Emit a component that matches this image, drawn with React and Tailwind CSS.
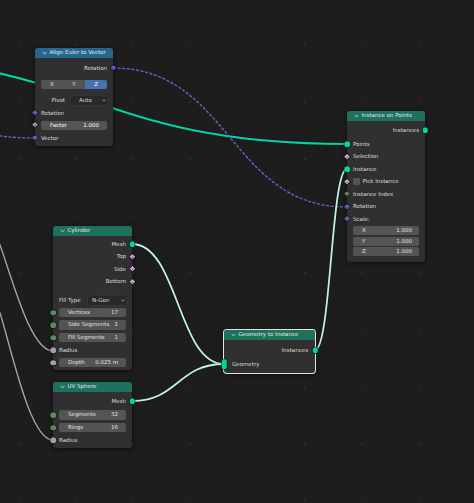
import React from "react";

function Chevron() {
  return (
    <svg width="5" height="4" viewBox="0 0 5 4" className="shrink-0">
      <polyline points="0.7,1 2.5,2.8 4.3,1" fill="none" stroke="#e8e8e8" strokeWidth="0.8" />
    </svg>
  );
}

function MenuChevron() {
  return (
    <svg width="4" height="3" viewBox="0 0 4 3" className="shrink-0">
      <polyline points="0.5,0.8 2,2.2 3.5,0.8" fill="none" stroke="#d0d0d0" strokeWidth="0.7" />
    </svg>
  );
}

function Sock({ side, kind, color }) {
  const pos = side === "left" ? "left-0 -translate-x-1/2" : "right-0 translate-x-1/2";
  if (kind === "circle") {
    return (
      <span
        className={`absolute top-1/2 -translate-y-1/2 ${pos} w-[5.5px] h-[5.5px] rounded-full ${color} shadow-[0_0_0_0.6px_rgba(0,0,0,0.7)]`}
      />
    );
  }
  if (kind === "multi") {
    return (
      <span
        className={`absolute top-1/2 -translate-y-1/2 ${pos} w-[4.5px] h-[9.5px] rounded-[2px] ${color} shadow-[0_0_0_0.6px_rgba(0,0,0,0.7)]`}
      />
    );
  }
  return (
    <span
      className={`absolute top-1/2 -translate-y-1/2 ${pos} w-[4.4px] h-[4.4px] rotate-45 ${color} flex items-center justify-center shadow-[0_0_0_0.6px_rgba(0,0,0,0.7)]`}
    >
      <span className="w-[1.4px] h-[1.4px] bg-[#303030]" />
    </span>
  );
}

function Node({ pos, color, title, selected, body, children }) {
  return (
    <div
      className={`absolute rounded-[3px] bg-[#303030] shadow-[0_1px_5px_rgba(0,0,0,0.6)] ${
        selected ? "ring-1 ring-[#e4e4e4]" : ""
      } ${pos}`}
    >
      <div className={`h-[10px] flex items-center pl-[7px] gap-[2.5px] rounded-t-[3px] ${color} text-[#e8e8e8]`}>
        <Chevron />
        <span className="leading-none">{title}</span>
      </div>
      <div className={`flex flex-col ${body}`}>{children}</div>
    </div>
  );
}

function Row({ className = "", children }) {
  return <div className={`relative h-[12.5px] flex items-center ${className}`}>{children}</div>;
}

function Field({ label, value, className = "" }) {
  return (
    <div
      className={`mx-[6px] flex-1 h-[9.5px] rounded-[2px] bg-[#545454] flex items-center justify-between pl-[9px] pr-[8px] text-[#e2e2e2] leading-none ${className}`}
    >
      <span>{label}</span>
      <span>{value}</span>
    </div>
  );
}

const TEAL = "bg-[#00d6a3]";
const PURPLE = "bg-[#6363c7]";
const PINK = "bg-[#cca6d6]";
const GREEN = "bg-[#598c5c]";
const GREY = "bg-[#a1a1a1]";

function Wire({ d, color, width, outline = true, dash }) {
  return (
    <>
      {outline && <path d={d} fill="none" stroke="#111" strokeWidth={width + 1.3} opacity="0.5" />}
      <path d={d} fill="none" stroke={color} strokeWidth={width} strokeDasharray={dash} />
    </>
  );
}

function Wires() {
  const xs = [19, 76, 133, 190, 248, 305, 362, 419];
  const ys = [45, 102, 159, 216, 273, 330, 387, 444, 501];
  return (
    <svg className="absolute inset-0" width="474" height="503" viewBox="0 0 474 503">
      {ys.map((y) =>
        xs.map((x) => <rect key={`${x}-${y}`} x={x - 0.75} y={y - 0.75} width="1.5" height="1.5" fill="#353535" />)
      )}
      {/* grey float wires */}
      <Wire d="M -6 228 L 0 245 C 14 284, 31 351, 53 351" color="#a6a6a6" width={1.4} />
      <Wire d="M -6 294 L 0 313 C 12 351, 30 440, 53 440" color="#a6a6a6" width={1.4} />
      {/* teal to Points */}
      <Wire d="M -170 56 C 88.5 56, 88.5 144, 347 144" color="#00d6a3" width={2.1} />
      {/* purple dashed */}
      <Wire d="M 113 68 C 230 68, 230 207, 347 207" color="#6a6ad2" width={1.3} outline={false} dash="3 1.6" />
      <Wire d="M -60 130 C -12 130, -12 138, 35 138" color="#6a6ad2" width={1.3} outline={false} dash="3 1.6" />
      {/* highlighted wires */}
      <Wire d="M 132 244 C 178 244, 178 364, 224 364" color="#c4f2e2" width={1.8} />
      <Wire d="M 132 401 C 178 401, 178 364, 224 364" color="#c4f2e2" width={1.8} />
      <Wire d="M 315 350 C 331 350, 331 169, 347 169" color="#c4f2e2" width={1.8} />
    </svg>
  );
}

export default function App() {
  return (
    <div className="relative w-[474px] h-[503px] overflow-hidden bg-[#1d1d1d] font-['DejaVu_Sans',sans-serif] text-[5.5px] text-[#dcdcdc]">
      <Wires />

      {/* Align Euler to Vector */}
      <Node pos="left-[35px] top-[48px] w-[78px]" color="bg-[#28678d]" title="Align Euler to Vector" body="pt-[3.5px] pb-[2px]">
        <Row className="justify-end pr-[6px]">
          <span>Rotation</span>
          <Sock side="right" kind="diamond" color={PURPLE} />
        </Row>
        <Row className="mt-[4px]">
          <div className="mx-[6px] flex-1 h-[9px] flex gap-[0.5px] rounded-[2px] overflow-hidden text-[#e2e2e2]">
            <div className="flex-1 bg-[#545454] flex items-center justify-center">X</div>
            <div className="flex-1 bg-[#545454] flex items-center justify-center">Y</div>
            <div className="flex-1 bg-[#4772b3] flex items-center justify-center text-white">Z</div>
          </div>
        </Row>
        <Row className="mt-[3.5px] justify-end pr-[6px] gap-[6px]">
          <span>Pivot</span>
          <div className="w-[36px] h-[9px] rounded-[2px] bg-[#282828] shadow-[0_0_0_0.5px_#3a3a3a] flex items-center justify-between pl-[8px] pr-[1.5px]">
            <span>Auto</span>
            <MenuChevron />
          </div>
        </Row>
        <Row className="pl-[6px]">
          <Sock side="left" kind="diamond" color={PURPLE} />
          <span>Rotation</span>
        </Row>
        <Row>
          <Sock side="left" kind="diamond" color={GREY} />
          <Field label="Factor" value="1.000" className="bg-[#4772b3] pl-[8px] pr-[7px] text-white" />
        </Row>
        <Row className="pl-[6px]">
          <Sock side="left" kind="diamond" color={PURPLE} />
          <span>Vector</span>
        </Row>
      </Node>

      {/* Instance on Points */}
      <Node pos="left-[347px] top-[111px] w-[78px]" color="bg-[#1d725e]" title="Instance on Points" body="pt-[2.75px] pb-[6px]">
        <Row className="justify-end pr-[6px]">
          <span>Instances</span>
          <Sock side="right" kind="circle" color={TEAL} />
        </Row>
        <Row className="mt-[1.5px] pl-[6px]">
          <Sock side="left" kind="circle" color={TEAL} />
          <span>Points</span>
        </Row>
        <Row className="pl-[6px]">
          <Sock side="left" kind="diamond" color={PINK} />
          <span>Selection</span>
        </Row>
        <Row className="pl-[6px]">
          <Sock side="left" kind="circle" color={TEAL} />
          <span>Instance</span>
        </Row>
        <Row className="pl-[6px] gap-[2.5px]">
          <Sock side="left" kind="diamond" color={PINK} />
          <span className="w-[7px] h-[7px] rounded-[1px] bg-[#545454]" />
          <span>Pick Instance</span>
        </Row>
        <Row className="pl-[6px]">
          <Sock side="left" kind="diamond" color={GREEN} />
          <span>Instance Index</span>
        </Row>
        <Row className="pl-[6px]">
          <Sock side="left" kind="diamond" color={PURPLE} />
          <span>Rotation</span>
        </Row>
        <Row className="pl-[6px]">
          <Sock side="left" kind="diamond" color={PURPLE} />
          <span>Scale:</span>
        </Row>
        <div className="mt-[0.75px] mx-[6px] flex flex-col gap-[1.5px] text-[#e2e2e2]">
          <div className="h-[9px] rounded-[2px] bg-[#545454] flex items-center justify-between pl-[9px] pr-[7px]">
            <span>X</span>
            <span>1.000</span>
          </div>
          <div className="h-[9px] rounded-[2px] bg-[#545454] flex items-center justify-between pl-[9px] pr-[7px]">
            <span>Y</span>
            <span>1.000</span>
          </div>
          <div className="h-[9px] rounded-[2px] bg-[#545454] flex items-center justify-between pl-[9px] pr-[7px]">
            <span>Z</span>
            <span>1.000</span>
          </div>
        </div>
      </Node>

      {/* Cylinder */}
      <Node pos="left-[53px] top-[226px] w-[79px]" color="bg-[#1d725e]" title="Cylinder" body="pt-[1.75px] pb-[1.25px]">
        <Row className="justify-end pr-[6px]">
          <span>Mesh</span>
          <Sock side="right" kind="circle" color={TEAL} />
        </Row>
        <Row className="justify-end pr-[6px]">
          <span>Top</span>
          <Sock side="right" kind="diamond" color={PINK} />
        </Row>
        <Row className="justify-end pr-[6px]">
          <span>Side</span>
          <Sock side="right" kind="diamond" color={PINK} />
        </Row>
        <Row className="justify-end pr-[6px]">
          <span>Bottom</span>
          <Sock side="right" kind="diamond" color={PINK} />
        </Row>
        <Row className="mt-[6px] pl-[6px] pr-[6px] justify-between">
          <span>Fill Type</span>
          <div className="w-[38px] h-[9px] rounded-[2px] bg-[#282828] shadow-[0_0_0_0.5px_#3a3a3a] flex items-center justify-between pl-[4px] pr-[1.5px]">
            <span>N-Gon</span>
            <MenuChevron />
          </div>
        </Row>
        <Row>
          <Sock side="left" kind="circle" color={GREEN} />
          <Field label="Vertices" value="17" />
        </Row>
        <Row>
          <Sock side="left" kind="circle" color={GREEN} />
          <Field label="Side Segments" value="1" />
        </Row>
        <Row>
          <Sock side="left" kind="circle" color={GREEN} />
          <Field label="Fill Segments" value="1" />
        </Row>
        <Row className="pl-[6px]">
          <Sock side="left" kind="circle" color={GREY} />
          <span>Radius</span>
        </Row>
        <Row>
          <Sock side="left" kind="circle" color={GREY} />
          <Field label="Depth" value="0.025 m" />
        </Row>
      </Node>

      {/* UV Sphere */}
      <Node pos="left-[53px] top-[382px] w-[79px]" color="bg-[#1d725e]" title="UV Sphere" body="pt-[2.75px] pb-[1.75px]">
        <Row className="justify-end pr-[6px]">
          <span>Mesh</span>
          <Sock side="right" kind="circle" color={TEAL} />
        </Row>
        <Row className="mt-[1.5px]">
          <Sock side="left" kind="circle" color={GREEN} />
          <Field label="Segments" value="32" />
        </Row>
        <Row>
          <Sock side="left" kind="circle" color={GREEN} />
          <Field label="Rings" value="16" />
        </Row>
        <Row className="pl-[6px]">
          <Sock side="left" kind="circle" color={GREY} />
          <span>Radius</span>
        </Row>
      </Node>

      {/* Geometry to Instance */}
      <Node pos="left-[224px] top-[330px] w-[91px]" color="bg-[#1d725e]" title="Geometry to Instance" selected body="pt-[3.75px] pb-[2.75px]">
        <Row className="justify-end pr-[7px]">
          <span>Instances</span>
          <Sock side="right" kind="circle" color={TEAL} />
        </Row>
        <Row className="mt-[1.5px] pl-[8px]">
          <Sock side="left" kind="multi" color={TEAL} />
          <span>Geometry</span>
        </Row>
      </Node>
    </div>
  );
}
